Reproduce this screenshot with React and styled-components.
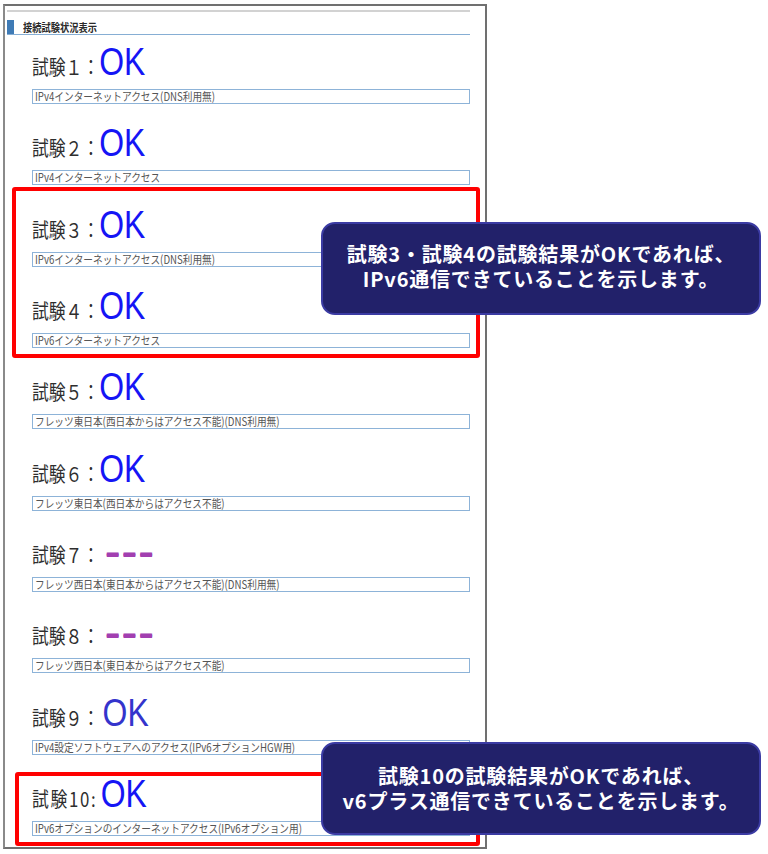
import React from 'react';
import styled, { createGlobalStyle } from 'styled-components';

const Global = createGlobalStyle`
  html, body { margin: 0; padding: 0; background: #fff; }
  body { font-family: "Noto Sans CJK JP", "Noto Sans", sans-serif; }
`;

const Stage = styled.div`
  position: relative;
  width: 768px;
  height: 854px;
  padding: 4px 0 0 3px;
  box-sizing: border-box;
  overflow: hidden;
`;

const Panel = styled.div`
  width: 484px;
  height: 845px;
  box-sizing: border-box;
  border: 2px solid #707070;
  border-left-color: #8a8a8a;
  padding: 4px 15px 0 2px;
  background: #fff;
`;

const TopRule = styled.div`
  height: 2px;
  background: #d2d2d2;
`;

const Header = styled.div`
  margin-top: 8px;
  height: 15px;
  box-sizing: border-box;
  border-bottom: 1px solid #86aed4;
  display: flex;
  align-items: stretch;
  gap: 9px;
`;

const HeaderMark = styled.span`
  width: 7px;
  background: #3f7bb6;
`;

const HeaderText = styled.span`
  display: inline-block;
  font-size: 11px;
  font-weight: 700;
  line-height: 14px;
  color: #2a2a2a;
  white-space: nowrap;
  transform: scaleX(0.84);
  transform-origin: left center;
`;

const Rows = styled.div`
  margin-top: 7px;
  padding-left: 25px;
  display: flex;
  flex-direction: column;
  gap: 19.33px;
`;

const Group = styled.div`
  position: relative;
  display: flex;
  flex-direction: column;
  gap: 19.33px;
  &::after {
    content: '';
    position: absolute;
    top: ${p => p.$top}px;
    bottom: ${p => p.$bottom}px;
    left: ${p => p.$left}px;
    right: -10px;
    border: 4px solid #ff0000;
    border-radius: 3px;
    pointer-events: none;
  }
`;

const Row = styled.div`
  display: flex;
  flex-direction: column;
`;

const TitleLine = styled.div`
  height: 40px;
  display: flex;
  align-items: baseline;
  white-space: nowrap;
  transform: scaleX(0.84);
  transform-origin: left center;
`;

const Label = styled.span`
  font-size: 20px;
  line-height: 40px;
  color: #2e2e2e;
  font-family: "Noto Sans CJK JP", sans-serif;
  letter-spacing: ${p => p.$spacing || 0}px;
`;

const Value = styled.span`
  font-family: "Liberation Sans", Arial, sans-serif;
  font-size: 38px;
  line-height: 40px;
  color: ${p => p.$color || '#1515f5'};
  margin-left: ${p => p.$shift || 0}px;
`;

const Dashes = styled.span`
  font-family: "Noto Sans CJK JP", sans-serif;
  font-size: 20px;
  font-weight: 900;
  color: #a23fb0;
  margin-left: 6px;
  text-shadow: 0 0.6px 0 #a23fb0, 0 -0.6px 0 #a23fb0;
`;

const Box = styled.div`
  margin-top: 7px;
  width: 438px;
  height: 15px;
  box-sizing: border-box;
  border: 1px solid #8db3d8;
  background: #fff;
  display: flex;
  align-items: center;
  padding-left: 2px;
  overflow: hidden;
`;

const BoxText = styled.span`
  display: inline-block;
  font-size: 11.5px;
  line-height: 13px;
  color: #555;
  white-space: nowrap;
  transform: scaleX(0.84);
  transform-origin: left center;
`;

const Callout = styled.div`
  position: absolute;
  left: 321px;
  top: ${p => p.$top}px;
  width: 440px;
  height: 93px;
  box-sizing: border-box;
  padding-bottom: ${p => p.$pb || 0}px;
  background: #22216a;
  border: 2px solid #3b3ba3;
  border-radius: 14px;
  display: flex;
  flex-direction: column;
  align-items: center;
  justify-content: center;
  color: #fff;
  font-family: "Noto Sans CJK JP", sans-serif;
  font-weight: 700;
  font-size: 20px;
  line-height: 25px;
  letter-spacing: 0.8px;
  white-space: nowrap;
`;

const tests = [
  { n: '１：', v: 'OK', d: 'IPv4インターネットアクセス(DNS利用無)' },
  { n: '２：', v: 'OK', d: 'IPv4インターネットアクセス' },
  { n: '３：', v: 'OK', d: 'IPv6インターネットアクセス(DNS利用無)' },
  { n: '４：', v: 'OK', d: 'IPv6インターネットアクセス' },
  { n: '５：', v: 'OK', d: 'フレッツ東日本(西日本からはアクセス不能)(DNS利用無)' },
  { n: '６：', v: 'OK', d: 'フレッツ東日本(西日本からはアクセス不能)' },
  { n: '７：', v: '---', d: 'フレッツ西日本(東日本からはアクセス不能)(DNS利用無)' },
  { n: '８：', v: '---', d: 'フレッツ西日本(東日本からはアクセス不能)' },
  { n: '９：', v: 'OK', d: 'IPv4設定ソフトウェアへのアクセス(IPv6オプションHGW用)', color: '#3434cc', shift: 4 },
  { n: '10:', v: 'OK', d: 'IPv6オプションのインターネットアクセス(IPv6オプション用)', spacing: 2, shift: 4 },
];

function TestRow({ t }) {
  return (
    <Row>
      <TitleLine>
        <Label $spacing={t.spacing}>試験{t.n}</Label>
        <Value $color={t.color} $shift={t.shift}>
          {t.v === 'OK' ? 'OK' : <Dashes>－－－</Dashes>}
        </Value>
      </TitleLine>
      <Box>
        <BoxText>{t.d}</BoxText>
      </Box>
    </Row>
  );
}

export default function App() {
  return (
    <>
      <Global />
      <Stage>
        <Panel>
          <TopRule />
          <Header>
            <HeaderMark />
            <HeaderText>接続試験状況表示</HeaderText>
          </Header>
          <Rows>
            <TestRow t={tests[0]} />
            <TestRow t={tests[1]} />
            <Group $top={-18} $bottom={-10} $left={-20}>
              <TestRow t={tests[2]} />
              <TestRow t={tests[3]} />
            </Group>
            <TestRow t={tests[4]} />
            <TestRow t={tests[5]} />
            <TestRow t={tests[6]} />
            <TestRow t={tests[7]} />
            <TestRow t={tests[8]} />
            <Group $top={-2} $bottom={-10} $left={-17}>
              <TestRow t={tests[9]} />
            </Group>
          </Rows>
        </Panel>
        <Callout $top={222} $pb={5}>
          <span>試験3・試験4の試験結果がOKであれば、</span>
          <span>IPv6通信できていることを示します。</span>
        </Callout>
        <Callout $top={742} $pb={2}>
          <span>試験10の試験結果がOKであれば、</span>
          <span>v6プラス通信できていることを示します。</span>
        </Callout>
      </Stage>
    </>
  );
}
